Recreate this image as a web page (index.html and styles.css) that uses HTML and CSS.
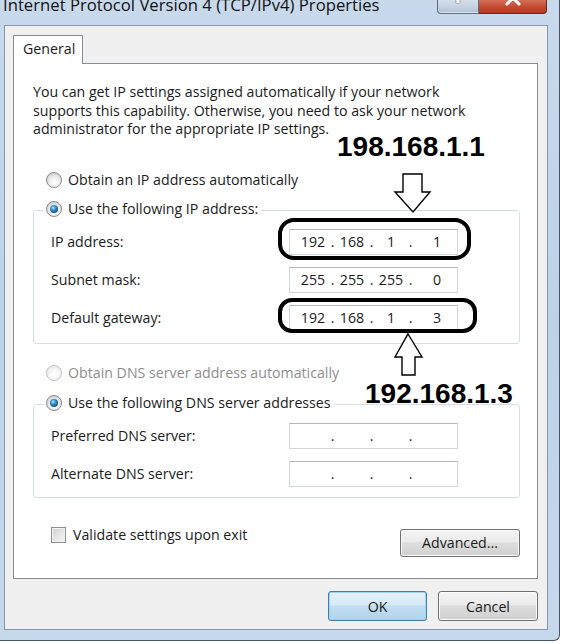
FILE: index.html
```html
<!DOCTYPE html>
<html lang="en">
<head>
<meta charset="utf-8">
<title>Internet Protocol Version 4 (TCP/IPv4) Properties</title>
<link rel="stylesheet" href="styles.css">
</head>
<body>
<div class="window">
  <div class="titlebar">
    <span class="title">Internet Protocol Version 4 (TCP/IPv4) Properties</span>
    <div class="caption">
      <span class="cap-btn help"><span class="help-glyph">?</span></span>
      <span class="cap-btn close">
        <svg class="x-glyph" width="20" height="14" viewBox="0 0 20 14"><path d="M4 -8 L16 4 M16 -8 L4 4" stroke="#fff" stroke-width="3" stroke-linecap="round"/></svg>
      </span>
    </div>
  </div>
  <div class="client">
    <div class="tabs"><div class="tab">General</div></div>
    <div class="panel">
      <p class="intro">You can get IP settings assigned automatically if your network supports this capability. Otherwise, you need to ask your network administrator for the appropriate IP settings.</p>

      <div class="radio-row first"><span class="radio"></span><span>Obtain an IP address automatically</span></div>
      <fieldset class="group ip-group">
        <legend><span class="radio-row"><span class="radio on"></span><span>Use the following IP address:</span></span></legend>
        <div class="rows">
          <div class="field-row"><span class="label">IP address:</span><div class="ipbox"><span class="oct">192</span><span class="dot">.</span><span class="oct">168</span><span class="dot">.</span><span class="oct">1</span><span class="dot">.</span><span class="oct last">1</span></div></div>
          <div class="field-row"><span class="label">Subnet mask:</span><div class="ipbox"><span class="oct">255</span><span class="dot">.</span><span class="oct">255</span><span class="dot">.</span><span class="oct">255</span><span class="dot">.</span><span class="oct last">0</span></div></div>
          <div class="field-row"><span class="label">Default gateway:</span><div class="ipbox"><span class="oct">192</span><span class="dot">.</span><span class="oct">168</span><span class="dot">.</span><span class="oct">1</span><span class="dot">.</span><span class="oct last">3</span></div></div>
        </div>
      </fieldset>

      <div class="radio-row second disabled"><span class="radio"></span><span>Obtain DNS server address automatically</span></div>
      <fieldset class="group dns-group">
        <legend><span class="radio-row"><span class="radio on"></span><span>Use the following DNS server addresses</span></span></legend>
        <div class="rows">
          <div class="field-row"><span class="label">Preferred DNS server:</span><div class="ipbox"><span class="oct"></span><span class="dot">.</span><span class="oct"></span><span class="dot">.</span><span class="oct"></span><span class="dot">.</span><span class="oct last"></span></div></div>
          <div class="field-row"><span class="label">Alternate DNS server:</span><div class="ipbox"><span class="oct"></span><span class="dot">.</span><span class="oct"></span><span class="dot">.</span><span class="oct"></span><span class="dot">.</span><span class="oct last"></span></div></div>
        </div>
      </fieldset>

      <div class="validate-row">
        <span class="check-wrap"><span class="check"></span><span>Validate settings upon exit</span></span>
        <button class="btn adv">Advanced...</button>
      </div>
    </div>
    <div class="footer">
      <button class="btn ok">OK</button>
      <button class="btn cancel">Cancel</button>
    </div>
  </div>

  <svg class="marks" width="562" height="644" viewBox="0 0 562 644">
    <rect x="280" y="220" width="189" height="38" rx="14" ry="14" fill="none" stroke="#000" stroke-width="4"/>
    <rect x="280" y="300" width="195" height="31" rx="12" ry="12" fill="none" stroke="#000" stroke-width="4"/>
    <polygon points="403,174 422,174 422,192 430,192 413,212 395,192 403,192" fill="#fff" stroke="#000" stroke-width="1.4" stroke-linejoin="miter"/>
    <polygon points="408,334 422,357 415,357 415,375 402,375 402,357 395,357" fill="#fff" stroke="#000" stroke-width="1.4" stroke-linejoin="miter"/>
  </svg>
  <div class="note note-top">198.168.1.1</div>
  <div class="note note-bottom">192.168.1.3</div>
</div>
</body>
</html>
```

FILE: styles.css
```css
* { box-sizing: border-box; }

body {
  margin: 0;
  background: #ffffff;
  font-family: "Open Sans", "DejaVu Sans", sans-serif;
  font-size: 14.2px;
  color: #1b1b1b;
}

.window {
  position: relative;
  width: 560px;
  height: 641px;
  padding: 0 11px 0 4px;
  background: linear-gradient(180deg, #c8d9ec 0%, #bdd2e9 50%, #c6d8ec 100%);
  border-right: 1px solid #44546b;
  border-bottom: 1px solid #44546b;
  border-bottom-right-radius: 6px;
  overflow: hidden;
}

/* title bar */
.titlebar {
  height: 25px;
  display: flex;
  justify-content: space-between;
  align-items: flex-start;
}
.title {
  font-size: 16.7px;
  line-height: 18px;
  margin-top: -4px;
  margin-left: -1px;
  color: #111;
  white-space: nowrap;
}
.caption {
  display: flex;
  margin-right: 1px;
}
.cap-btn {
  position: relative;
  height: 14px;
  border: 1px solid #5b6b82;
  border-top: none;
  overflow: hidden;
}
.help {
  width: 42px;
  border-bottom-left-radius: 4px;
  background: linear-gradient(180deg, #d5dfeb 0%, #c2cfdf 60%, #aebfd4 100%);
  box-shadow: inset 0 -1px 0 rgba(255,255,255,0.6);
}
.help-glyph {
  position: absolute;
  left: 15px;
  top: -13px;
  font: bold 19px/19px "DejaVu Sans", sans-serif;
  color: #fff;
  text-shadow: 0 0 1px #334, 0 0 1px #334;
}
.close {
  width: 68px;
  border-left: none;
  border-color: #6d2316;
  border-bottom-right-radius: 4px;
  background: linear-gradient(180deg, #d4705b 0%, #c4482f 55%, #b23a24 100%);
}
.x-glyph {
  position: absolute;
  left: 24px;
  top: 0;
}

/* client area */
.client {
  height: 605px;
  background: #f0f0f0;
  border: 1px solid #8797ad;
  padding: 9px 9px 0 8px;
}

.tabs {
  display: flex;
  position: relative;
  z-index: 1;
}
.tab {
  width: 70px;
  height: 29px;
  margin-bottom: -1px;
  background: #ffffff;
  border: 1px solid #898c95;
  border-bottom: none;
  padding: 3px 0 0 9px;
  line-height: 20px;
}

.panel {
  position: relative;
  height: 516px;
  background: #ffffff;
  border: 1px solid #898c95;
}

.intro {
  width: 484px;
  margin: 19px 0 0;
  padding: 0 0 0 19px;
  line-height: 18.5px;
}

.radio-row {
  display: flex;
  align-items: center;
  gap: 6px;
  height: 20px;
  white-space: nowrap;
}
.radio-row.first { margin: 31px 0 0 32px; }
.radio-row.second { margin: 19px 0 0 32px; }
.radio-row.disabled { color: #8e8e8e; }

.radio {
  position: relative;
  flex: none;
  width: 16px;
  height: 16px;
  border-radius: 50%;
  border: 1px solid #8a8a8a;
  background: radial-gradient(circle at 55% 65%, #ffffff 0%, #f2f2f2 35%, #cfcfcf 80%, #bdbdbd 100%);
}
.disabled .radio {
  border-color: #c2c2c2;
  background: radial-gradient(circle at 55% 65%, #ffffff 0%, #f7f7f7 40%, #e0e0e0 100%);
}
.radio.on::after {
  content: "";
  position: absolute;
  inset: 3px;
  border-radius: 50%;
  background: radial-gradient(circle at 40% 35%, #b5e6ff 0%, #3c9ad6 30%, #12538c 70%, #0a3766 100%);
}

.group {
  margin: 0 17px 0 19px;
  padding: 0;
  border: 1px solid #d5dfe5;
  border-radius: 3px;
  min-width: 0;
}
.ip-group { margin-top: 9px; padding-bottom: 12px; }
.dns-group { margin-top: 10px; padding-bottom: 10px; }

.group legend {
  margin-left: 10px;
  padding: 0 3px 4px 2px;
}

.rows {
  display: flex;
  flex-direction: column;
  gap: 12px;
  padding-top: 6px;
}

.field-row {
  display: flex;
  align-items: center;
  height: 26px;
  margin-left: 17px;
}
.label {
  width: 238px;
  flex: none;
}
.ipbox {
  display: flex;
  align-items: center;
  width: 169px;
  height: 26px;
  padding-left: 7px;
  background: #ffffff;
  border: 1px solid #d2d6db;
  border-top-color: #b4b7bd;
}
.oct {
  width: 32px;
  text-align: center;
}
.oct.last { width: 38px; text-align: right; padding-right: 11px; }
.dot {
  width: 7px;
  text-align: center;
}

.validate-row {
  display: flex;
  align-items: flex-start;
  margin: 29px 17px 0 37px;
}
.check-wrap {
  display: flex;
  align-items: center;
  gap: 7px;
  height: 16px;
}
.check {
  flex: none;
  width: 15px;
  height: 16px;
  border: 1px solid #8e8f8f;
  background: linear-gradient(135deg, #cfcfcf 0%, #e4e4e4 50%, #f6f6f6 100%);
  box-shadow: inset 0 0 0 1px #f4f4f4;
}

.btn {
  font: inherit;
  color: #1b1b1b;
  height: 30px;
  padding: 0;
  border: 1px solid #707070;
  border-radius: 3px;
  background: linear-gradient(180deg, #f4f4f4 0%, #ebebeb 45%, #dddddd 50%, #cfcfcf 100%);
  box-shadow: inset 0 0 0 1px #fbfbfb;
}
.btn.adv {
  width: 120px;
  height: 28px;
  margin: 2px 0 0 auto;
}
.btn.ok {
  width: 99px;
  border-color: #3c7fb1;
  background: linear-gradient(180deg, #e6f2fa 0%, #d6eaf7 45%, #c3def1 50%, #b2d3ea 100%);
  box-shadow: inset 0 0 0 1px #9fd2f0;
}
.btn.cancel { width: 100px; }

.footer {
  display: flex;
  justify-content: flex-end;
  gap: 11px;
  padding-top: 12px;
}

/* annotations drawn over the dialog */
.marks {
  position: absolute;
  left: 0;
  top: 0;
  pointer-events: none;
}
.note {
  position: absolute;
  font: bold 28px/28px "Liberation Sans", Arial, sans-serif;
  color: #000;
  white-space: nowrap;
}
.note-top { left: 337px; top: 133px; }
.note-bottom { left: 365px; top: 380px; }
```
